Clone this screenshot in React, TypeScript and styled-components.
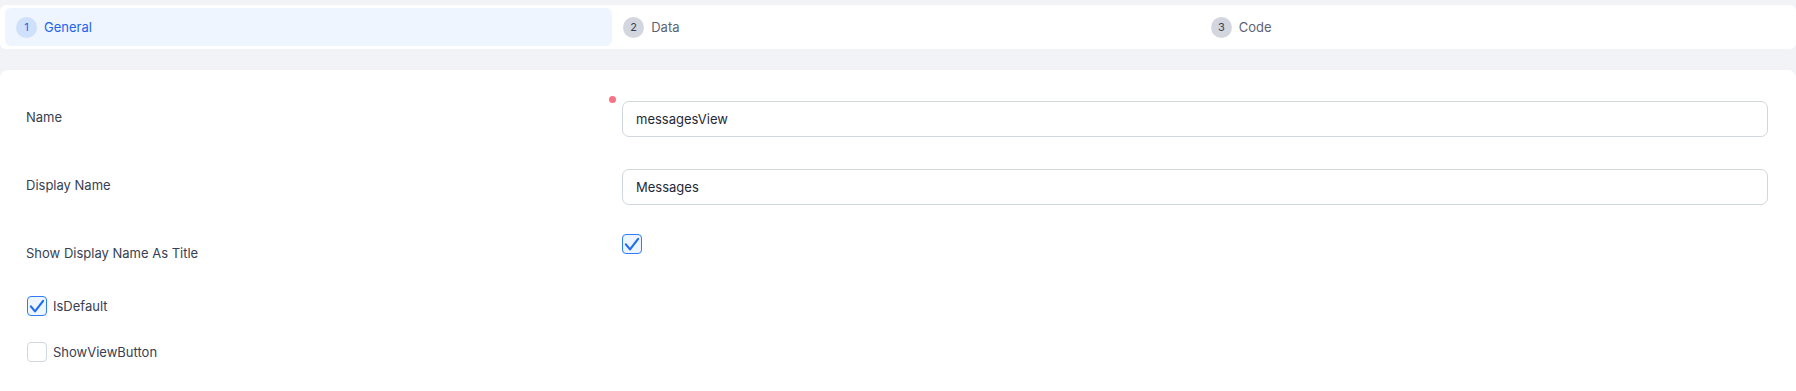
import React from "react";
import styled, { createGlobalStyle } from "styled-components";

const GlobalStyle = createGlobalStyle`
  html, body {
    margin: 0;
    padding: 0;
    background: #f2f3f6;
    font-family: Inter, "Noto Sans", "Liberation Sans", sans-serif;
    color: #374151;
  }
  * { box-sizing: border-box; }
`;

const Page = styled.div`
  display: flex;
  flex-direction: column;
  min-height: 100vh;
  padding-top: 5px;
`;

const Steps = styled.div`
  display: flex;
  background: #fff;
  border-radius: 6px;
  padding: 3px 4px 3px 5px;
`;

const Step = styled.div<{ $active?: boolean }>`
  flex: 1 1 auto;
  display: flex;
  align-items: center;
  gap: 7px;
  height: 38px;
  padding-left: 11px;
  border-radius: 6px;
  background: ${(p) => (p.$active ? "#eef5ff" : "transparent")};
  color: ${(p) => (p.$active ? "#2563eb" : "#5b6477")};
  font-size: 13px;
`;

const StepNumber = styled.span<{ $active?: boolean }>`
  width: 21px;
  height: 21px;
  border-radius: 50%;
  display: flex;
  align-items: center;
  justify-content: center;
  font-size: 11px;
  background: ${(p) => (p.$active ? "#cfe0fb" : "#d3d6de")};
  color: ${(p) => (p.$active ? "#2563eb" : "#374151")};
`;

const Panel = styled.div`
  flex: 1;
  margin-top: 21px;
  background: #fff;
  border-radius: 8px 8px 0 0;
  padding: 31px 28px 24px 26px;
`;

const Row = styled.div`
  display: grid;
  grid-template-columns: 580px 1fr;
  column-gap: 16px;
  align-items: start;
  min-height: 36px;
  margin-bottom: 32px;
`;

const Label = styled.label`
  font-size: 13px;
  line-height: 20px;
  padding-top: 6px;
  color: #374151;
`;

const Field = styled.div`
  position: relative;
`;

const Required = styled.span`
  position: absolute;
  left: -13px;
  top: -5px;
  width: 7px;
  height: 7px;
  border-radius: 50%;
  background: #f77382;
`;

const Input = styled.input`
  display: block;
  width: 100%;
  height: 36px;
  border: 1px solid #d2d6df;
  border-radius: 7px;
  padding: 0 13px;
  font: inherit;
  font-size: 13px;
  color: #1f2937;
  background: #fff;
  outline: none;
`;

const Box = styled.span<{ $checked?: boolean; $shift?: number }>`
  display: inline-flex;
  align-items: center;
  justify-content: center;
  width: 20px;
  height: 20px;
  flex: none;
  margin-top: ${(p) => p.$shift ?? 0}px;
  border-radius: 4px;
  border: 1.5px solid ${(p) => (p.$checked ? "#2f7cf6" : "#d2d6df")};
  background: ${(p) => (p.$checked ? "#eef5ff" : "#fff")};
`;

const CheckList = styled.div`
  display: flex;
  flex-direction: column;
  gap: 26px;
  margin-top: -9px;
  padding-left: 1px;
`;

const CheckRow = styled.label`
  display: flex;
  align-items: center;
  gap: 6px;
  font-size: 13px;
  color: #374151;
`;

const Check = ({ checked, shift }: { checked?: boolean; shift?: number }) => (
  <Box $checked={checked} $shift={shift}>
    {checked && (
      <svg width="20" height="20" viewBox="0 0 20 20" fill="none">
        <path
          d="M3.2 10.4 L7.8 16 L16.8 4.4"
          stroke="#1c6ef2"
          strokeWidth="2.4"
          strokeLinecap="round"
          strokeLinejoin="round"
        />
      </svg>
    )}
  </Box>
);

const steps = ["General", "Data", "Code"];

export default function App() {
  return (
    <>
      <GlobalStyle />
      <Page>
        <Steps>
          {steps.map((s, i) => (
            <Step key={s} $active={i === 0}>
              <StepNumber $active={i === 0}>{i + 1}</StepNumber>
              {s}
            </Step>
          ))}
        </Steps>
        <Panel>
          <Row>
            <Label>Name</Label>
            <Field>
              <Required />
              <Input defaultValue="messagesView" />
            </Field>
          </Row>
          <Row>
            <Label>Display Name</Label>
            <Field>
              <Input defaultValue="Messages" />
            </Field>
          </Row>
          <Row>
            <Label>Show Display Name As Title</Label>
            <Field>
              <Check checked shift={-3} />
            </Field>
          </Row>
          <CheckList>
            <CheckRow>
              <Check checked />
              IsDefault
            </CheckRow>
            <CheckRow>
              <Check />
              ShowViewButton
            </CheckRow>
          </CheckList>
        </Panel>
      </Page>
    </>
  );
}
